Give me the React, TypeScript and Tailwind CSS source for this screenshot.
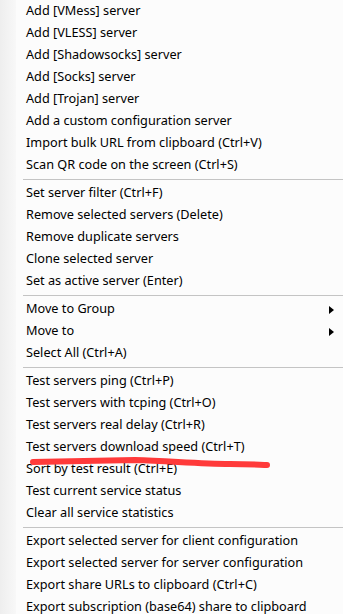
const groups: { label: string; sub?: boolean }[][] = [
  [
    { label: "Add [VMess] server" },
    { label: "Add [VLESS] server" },
    { label: "Add [Shadowsocks] server" },
    { label: "Add [Socks] server" },
    { label: "Add [Trojan] server" },
    { label: "Add a custom configuration server" },
    { label: "Import bulk URL from clipboard (Ctrl+V)" },
    { label: "Scan QR code on the screen (Ctrl+S)" },
  ],
  [
    { label: "Set server filter (Ctrl+F)" },
    { label: "Remove selected servers (Delete)" },
    { label: "Remove duplicate servers" },
    { label: "Clone selected server" },
    { label: "Set as active server (Enter)" },
  ],
  [
    { label: "Move to Group", sub: true },
    { label: "Move to", sub: true },
    { label: "Select All (Ctrl+A)" },
  ],
  [
    { label: "Test servers ping (Ctrl+P)" },
    { label: "Test servers with tcping (Ctrl+O)" },
    { label: "Test servers real delay (Ctrl+R)" },
    { label: "Test servers download speed (Ctrl+T)" },
    { label: "Sort by test result (Ctrl+E)" },
    { label: "Test current service status" },
    { label: "Clear all service statistics" },
  ],
  [
    { label: "Export selected server for client configuration" },
    { label: "Export selected server for server configuration" },
    { label: "Export share URLs to clipboard (Ctrl+C)" },
    { label: "Export subscription (base64) share to clipboard" },
  ],
];

function Item({ label, sub }: { label: string; sub?: boolean }) {
  return (
    <div className="flex h-[22px] items-center justify-between pl-[26px] pr-[9px]">
      <span className="whitespace-nowrap">{label}</span>
      {sub && (
        <svg width="5" height="8" viewBox="0 0 5 8" className="mt-[1px]">
          <path d="M0 0 L5 4 L0 8 Z" fill="#000" />
        </svg>
      )}
    </div>
  );
}

export default function App() {
  return (
    <div
      className="relative h-[614px] w-[343px] overflow-hidden bg-[#fcfcfc] text-[12.7px] text-black"
      style={{ fontFamily: '"Noto Sans", "Liberation Sans", sans-serif' }}
    >
      <div className="absolute left-0 top-0 h-full w-[16px] bg-gradient-to-r from-[#eeeeee] to-[#f8f8f8]" />
      <div className="relative">
        {groups.map((g, gi) => (
          <div key={gi}>
            {gi > 0 && (
              <div className="flex h-[6px] items-center pl-[23px]">
                <div className="h-px w-full bg-[#c4c4c4]" />
              </div>
            )}
            {g.map((it) => (
              <Item key={it.label} label={it.label} sub={it.sub} />
            ))}
          </div>
        ))}
      </div>
      {/* red marker stroke */}
      <svg className="absolute left-0 top-0" width="343" height="614" viewBox="0 0 343 614">
        <path
          d="M33 462 C90 461 120 460 135 460 C170 461 200 464 230 464 C250 464 262 465 267 465"
          stroke="#ff3a3a"
          strokeWidth="6"
          strokeLinecap="round"
          fill="none"
        />
      </svg>
    </div>
  );
}
